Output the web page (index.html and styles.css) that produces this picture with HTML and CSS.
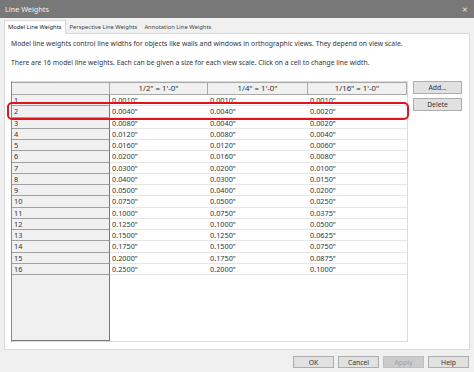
FILE: index.html
```html
<!DOCTYPE html>
<html lang="en">
<head>
    <meta charset="UTF-8">
    <title>Line Weights</title>
    <link rel="stylesheet" href="styles.css">
</head>
<body>
    <div class="titlebar">
        <span class="title">Line Weights</span>
        <span class="close">&#x2715;</span>
    </div>

    <div class="tabs">
        <div class="tab active">Model Line Weights</div>
        <div class="tab">Perspective Line Weights</div>
        <div class="tab">Annotation Line Weights</div>
    </div>

    <div class="panel">
        <p class="info">Model line weights control line widths for objects like walls and windows in orthographic views. They depend on view scale.</p>
        <p class="info second">There are 16 model line weights. Each can be given a size for each view scale. Click on a cell to change line width.</p>

        <div class="content">
            <div class="grid">
                <div class="head corner"></div>
                <div class="head">1/2" = 1'-0"</div>
                <div class="head">1/4" = 1'-0"</div>
                <div class="head">1/16" = 1'-0"</div>
            </div>
            <div class="highlight"></div>

            <div class="side-buttons">
                <button class="btn">Add...</button>
                <button class="btn">Delete</button>
            </div>
        </div>
    </div>

    <div class="footer">
        <button class="btn">OK</button>
        <button class="btn">Cancel</button>
        <button class="btn disabled">Apply</button>
        <button class="btn">Help</button>
    </div>

    <script>
        const grid = document.querySelector('.grid')

        const half = ['0.0010', '0.0040', '0.0080', '0.0120', '0.0160', '0.0200', '0.0300', '0.0400',
                      '0.0500', '0.0750', '0.1000', '0.1250', '0.1500', '0.1750', '0.2000', '0.2500']
        const quarter = ['0.0010', '0.0040', '0.0040', '0.0080', '0.0120', '0.0160', '0.0200', '0.0300',
                         '0.0400', '0.0500', '0.0750', '0.1000', '0.1250', '0.1500', '0.1750', '0.2000']
        const sixteenth = ['0.0010', '0.0020', '0.0020', '0.0040', '0.0060', '0.0080', '0.0100', '0.0150',
                           '0.0200', '0.0250', '0.0375', '0.0500', '0.0625', '0.0750', '0.0875', '0.1000']

        function cell(cls, text) {
            const el = document.createElement('div')
            el.className = cls
            el.textContent = text
            grid.append(el)
        }

        half.forEach((val, i) => {
            cell('num', i + 1)
            cell('val', val + '"')
            cell('val', quarter[i] + '"')
            cell('val', sixteenth[i] + '"')
        })

        // empty space below the last row
        cell('num filler', '')
        cell('val filler', '')
        cell('val filler', '')
        cell('val filler', '')
    </script>
</body>
</html>
```

FILE: styles.css
```css
* {
    margin: 0;
    padding: 0;
    box-sizing: border-box;
}

body {
    width: 474px;
    height: 372px;
    overflow: hidden;
    background-color: #f0f0f0;
    font-family: "Noto Sans", "Open Sans", sans-serif;
    font-size: 6.8px;
    color: #333;
}

.titlebar {
    height: 18px;
    background-color: #787878;
    display: flex;
    align-items: center;
    justify-content: space-between;
    padding: 0 6px 0 5px;
    color: #f2f2f2;
    font-size: 7.3px;
}

.close {
    font-size: 7px;
    color: #e8e8e8;
}

.tabs {
    display: flex;
    align-items: flex-end;
    height: 15px;
    padding-left: 4px;
}

.tab {
    height: 12px;
    padding: 0 2px;
    line-height: 12px;
    color: #444;
    font-size: 5.8px;
    margin-right: 3px;
}

.tab.active {
    height: 14px;
    line-height: 13px;
    padding: 0 3px;
    background-color: #fff;
    border: 1px solid #d9d9d9;
    border-bottom: none;
    color: #222;
    margin-right: 2px;
    margin-bottom: -1px;
    position: relative;
}

.panel {
    margin: 0 4px;
    height: 317px;
    background-color: #fff;
    border: 1px solid #d9d9d9;
    padding: 5px 6px 0;
}

.info {
    line-height: 9px;
    color: #333;
}

.info.second {
    margin-top: 10px;
}

.content {
    position: relative;
    margin-top: 14px;
    display: flex;
    gap: 5px;
}

.grid {
    display: grid;
    grid-template-columns: 98px 98px 100px 99px;
    grid-template-rows: 13px repeat(16, 11.25px) 1fr;
    width: 397px;
    height: 261px;
    border: 1px solid #dcdcdc;
    border-left-color: #8a8a8a;
    background-color: #fff;
    font-size: 7.3px;
}

.head {
    background-color: #f0f0f0;
    border-right: 1px solid #a8a8a8;
    border-bottom: 1px solid #a8a8a8;
    border-top: 1px solid #a8a8a8;
    text-align: center;
    line-height: 11px;
    font-size: 7.8px;
    color: #333;
}

.head:last-child {
    border-right: none;
}

.num {
    background-color: #f0f0f0;
    border-right: 1px solid #777;
    border-bottom: 1px solid #a0a0a0;
    padding-left: 2px;
    line-height: 10px;
}

.num.filler {
    border-bottom: 1px solid #777;
}

.val {
    border-bottom: 1px solid #e6e6e6;
    padding-left: 2px;
    line-height: 10px;
}

.val.filler {
    border-bottom: none;
}

.highlight {
    position: absolute;
    left: -4px;
    top: 21px;
    width: 402px;
    height: 18px;
    border: 2.5px solid #e3121c;
    border-radius: 5px;
    pointer-events: none;
}

.side-buttons {
    display: flex;
    flex-direction: column;
    gap: 4px;
}

.btn {
    width: 49px;
    height: 13px;
    background-color: #e1e1e1;
    border: 1px solid #adadad;
    font-family: inherit;
    font-size: 6.8px;
    color: #333;
}

.footer {
    display: flex;
    justify-content: flex-end;
    gap: 4px;
    padding: 6px 5px 0 0;
}

.footer .btn {
    width: 41px;
    height: 12px;
}

.btn.disabled {
    background-color: #cccccc;
    border-color: #bfbfbf;
    color: #a0a0a0;
}
```
